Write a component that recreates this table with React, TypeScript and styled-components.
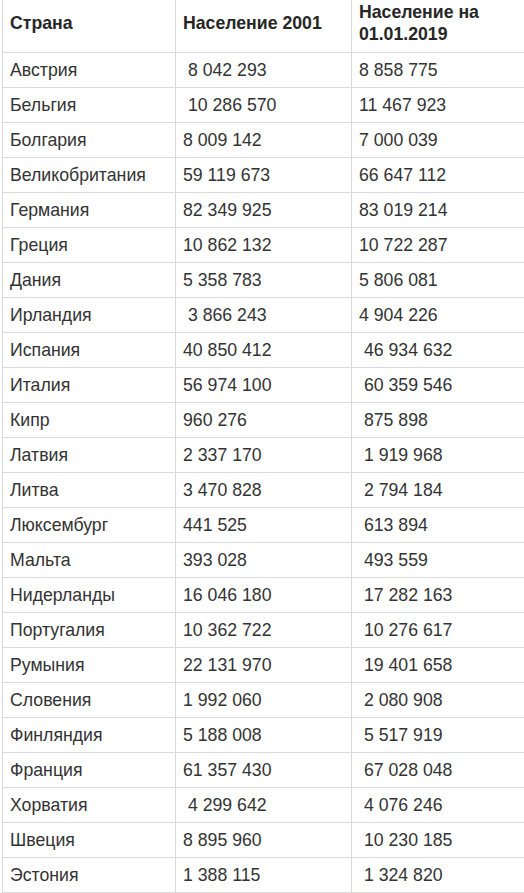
import React from "react";
import styled, { createGlobalStyle } from "styled-components";

const GlobalStyle = createGlobalStyle`
  html, body {
    margin: 0;
    padding: 0;
    background: #ffffff;
    overflow: hidden;
  }
  body {
    width: 524px;
    height: 893px;
    font-family: "Liberation Sans", Arial, sans-serif;
  }
`;

const Page = styled.div`
  width: 524px;
  height: 893px;
  overflow: hidden;
  background: #fff;
`;

const Table = styled.table`
  border-collapse: collapse;
  table-layout: fixed;
  width: 560px;
  margin: -7px 0 0 2px;
  font-family: "Liberation Sans", Arial, sans-serif;
  font-size: 17.7px;
  line-height: 22px;
  color: #333;
`;

const Col = styled.col<{ $w: number }>`
  width: ${(p) => p.$w}px;
`;

const HeadCell = styled.th`
  border: 1px solid #dadada;
  padding: 7px 7px;
  text-align: left;
  vertical-align: middle;
  font-weight: bold;
  color: #262626;
  white-space: normal;
`;

const Cell = styled.td`
  border: 1px solid #dadada;
  height: 34px;
  box-sizing: border-box;
  padding: 6px 7px;
  text-align: left;
  vertical-align: middle;
  white-space: pre;
`;

type Row = [string, string, string];

const rows: Row[] = [
  ["Австрия", " 8 042 293", "8 858 775"],
  ["Бельгия", " 10 286 570", "11 467 923"],
  ["Болгария", "8 009 142", "7 000 039"],
  ["Великобритания", "59 119 673", "66 647 112"],
  ["Германия", "82 349 925", "83 019 214"],
  ["Греция", "10 862 132", "10 722 287"],
  ["Дания", "5 358 783", "5 806 081"],
  ["Ирландия", " 3 866 243", "4 904 226"],
  ["Испания", "40 850 412", " 46 934 632"],
  ["Италия", "56 974 100", " 60 359 546"],
  ["Кипр", "960 276", " 875 898"],
  ["Латвия", "2 337 170", " 1 919 968"],
  ["Литва", "3 470 828", " 2 794 184"],
  ["Люксембург", "441 525", " 613 894"],
  ["Мальта", "393 028", " 493 559"],
  ["Нидерланды", "16 046 180", " 17 282 163"],
  ["Португалия", "10 362 722", " 10 276 617"],
  ["Румыния", "22 131 970", " 19 401 658"],
  ["Словения", "1 992 060", " 2 080 908"],
  ["Финляндия", "5 188 008", " 5 517 919"],
  ["Франция", "61 357 430", " 67 028 048"],
  ["Хорватия", " 4 299 642", " 4 076 246"],
  ["Швеция", "8 895 960", " 10 230 185"],
  ["Эстония", "1 388 115", " 1 324 820"],
];

export default function App() {
  return (
    <Page>
      <GlobalStyle />
      <Table>
        <colgroup>
          <Col $w={173} />
          <Col $w={176} />
          <Col $w={211} />
        </colgroup>
        <thead>
          <tr>
            <HeadCell>Страна</HeadCell>
            <HeadCell>Население 2001</HeadCell>
            <HeadCell>
              Население на
              <br />
              01.01.2019
            </HeadCell>
          </tr>
        </thead>
        <tbody>
          {rows.map((r) => (
            <tr key={r[0]}>
              <Cell>{r[0]}</Cell>
              <Cell>{r[1]}</Cell>
              <Cell>{r[2]}</Cell>
            </tr>
          ))}
        </tbody>
      </Table>
    </Page>
  );
}
